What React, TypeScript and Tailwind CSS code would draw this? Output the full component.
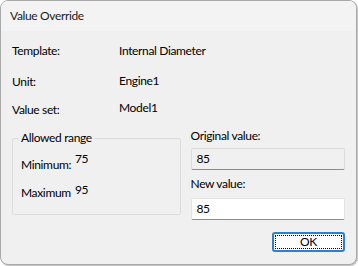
import React from "react";

export default function App() {
  return (
    <div className="w-[358px] h-[266px] bg-white">
      <div
        className="w-[357px] h-[265px] rounded-[8px] border border-[#a9a9a9] bg-[#f0f0f0] overflow-hidden flex flex-col text-[12px] tracking-[-0.35px] text-black shadow-[1px_1px_1px_rgba(0,0,0,0.25)]"
        style={{ fontFamily: 'Lato, "Noto Sans", sans-serif' }}
      >
        <div className="h-[30px] shrink-0 bg-[#f3f3f3] flex items-center pl-[9px] text-[#1b1b1b]">
          Value Override
        </div>
        <div className="flex flex-col px-[11px]">
          <div className="flex items-start mt-[12px] h-[16px] leading-[16px]">
            <div className="w-[107px]">Template:</div>
            <div>Internal Diameter</div>
          </div>
          <div className="flex items-start mt-[14px] h-[19px] leading-[16px]">
            <div className="w-[107px] mt-[1px]">Unit:</div>
            <div>Engine1</div>
          </div>
          <div className="flex items-start mt-[8px] h-[19px] leading-[16px]">
            <div className="w-[107px] mt-[2px]">Value set:</div>
            <div>Model1</div>
          </div>
          <div className="flex items-start mt-[11px] gap-[10px]">
            <fieldset className="w-[169px] h-[85px] border border-[#dcdcdc] rounded-[2px] px-[8px] leading-[16px]">
              <legend className="-ml-[2px] px-[2px]">Allowed range</legend>
              <div className="flex items-start mt-[5px] h-[20px]">
                <div className="w-[54px] mt-[6px]">Minimum:</div>
                <div>75</div>
              </div>
              <div className="flex items-start mt-[11px] h-[20px]">
                <div className="w-[54px] mt-[3px]">Maximum</div>
                <div>95</div>
              </div>
            </fieldset>
            <div className="flex flex-col w-[155px] leading-[16px] -mt-[2px]">
              <div>Original value:</div>
              <div className="mt-[4px] h-[22px] border border-[#dadada] border-b-[#8c8c8c] bg-[#f0f0f0] rounded-[2px] pl-[5px] flex items-center">
                85
              </div>
              <div className="mt-[6px]">New value:</div>
              <div className="mt-[6px] h-[22px] border border-[#e3e3e3] border-b-[#8c8c8c] bg-white rounded-[2px] pl-[5px] flex items-center">
                85
              </div>
              <div className="flex justify-end mt-[12px]">
                <div className="w-[73px] h-[20px] rounded-[3px] border-2 border-[#2f7fd0] bg-white p-[1px]">
                  <div className="w-full h-full border border-dotted border-black flex items-center justify-center leading-none">
                    OK
                  </div>
                </div>
              </div>
            </div>
          </div>
        </div>
      </div>
    </div>
  );
}
